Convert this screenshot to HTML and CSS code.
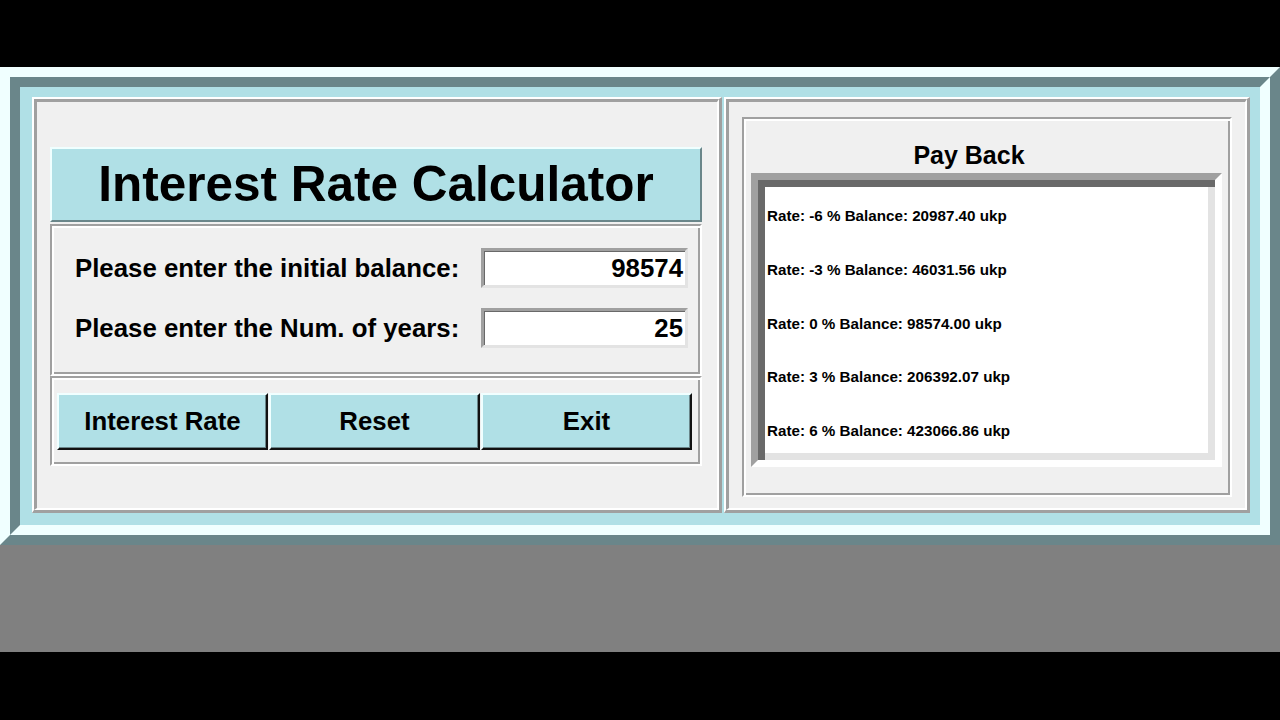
FILE: index.html
```html
<!DOCTYPE html>
<html>
<head>
<meta charset="utf-8">
<title>Interest Rate Calculator</title>
<link rel="stylesheet" href="styles.css">
</head>
<body>
<div class="top-bar"></div>
<div class="window">
  <div class="window-inner">
    <div class="panel left-panel">
      <div class="panel-inner">
        <div class="title">Interest Rate Calculator</div>
        <div class="groove entries">
          <div class="field-label">Please enter the initial balance:</div>
          <div class="entry">98574</div>
          <div class="field-label">Please enter the Num. of years:</div>
          <div class="entry">25</div>
        </div>
        <div class="groove buttons">
          <div class="btn">Interest Rate</div>
          <div class="btn">Reset</div>
          <div class="btn">Exit</div>
        </div>
      </div>
    </div>
    <div class="panel right-panel">
      <div class="panel-inner">
        <div class="groove payback">
          <div class="payback-title">Pay Back</div>
          <div class="listbox">
            <div class="item">Rate: -6 % Balance: 20987.40 ukp</div>
            <div class="item">Rate: -3 % Balance: 46031.56 ukp</div>
            <div class="item">Rate: 0 % Balance: 98574.00 ukp</div>
            <div class="item">Rate: 3 % Balance: 206392.07 ukp</div>
            <div class="item">Rate: 6 % Balance: 423066.86 ukp</div>
          </div>
        </div>
      </div>
    </div>
  </div>
</div>
<div class="gray-area"></div>
</body>
</html>
```
FILE: styles.css
```css
html, body {
  margin: 0;
  padding: 0;
}
body {
  width: 1280px;
  height: 720px;
  overflow: hidden;
  background: #000;
  font-family: "Liberation Sans", Arial, sans-serif;
  font-weight: bold;
  color: #000;
}
.top-bar {
  height: 67px;
  background: #000;
}
.window {
  height: 478px;
  box-sizing: border-box;
  border: 10px solid;
  border-color: #f0ffff #6a868a #6a868a #f0ffff;
}
.window-inner {
  height: 100%;
  box-sizing: border-box;
  border: 10px solid;
  border-color: #6a868a #f0ffff #f0ffff #6a868a;
  background: #b0e0e6;
  padding: 10px 10px 12px 12px;
  display: flex;
  gap: 2px;
}
.gray-area {
  height: 107px;
  background: #808080;
}
.panel {
  box-sizing: border-box;
  border-style: solid;
  border-width: 2px 3px 3px 2px;
  border-color: #ffffff #a0a0a0 #a0a0a0 #ffffff;
}
.panel-inner {
  box-sizing: border-box;
  height: 100%;
  border-style: solid;
  border-width: 3px 2px 2px 3px;
  border-color: #a0a0a0 #ffffff #ffffff #a0a0a0;
  background: #f0f0f0;
  display: flex;
  flex-direction: column;
}
.left-panel {
  width: 690px;
}
.right-panel {
  flex: 1;
}
.title {
  margin: 45px 15px 0 13px;
  height: 75px;
  box-sizing: border-box;
  border: 2px solid;
  border-color: #f0ffff #6a868a #6a868a #f0ffff;
  background: #b0e0e6;
  font-size: 49.5px;
  line-height: 69px;
  text-align: center;
}
.groove {
  box-sizing: border-box;
  border: 2px solid;
  border-color: #a0a0a0 #ffffff #ffffff #a0a0a0;
  box-shadow: inset 2px 2px #ffffff, inset -2px -2px #a0a0a0;
}
.entries {
  margin: 2px 15px 0 13px;
  height: 152px;
  padding: 22px 0 0 23px;
  display: grid;
  grid-template-columns: 385px 207px;
  grid-auto-rows: 40px;
  column-gap: 21px;
  row-gap: 20px;
  align-content: start;
}
.field-label {
  font-size: 25.8px;
  line-height: 40px;
  white-space: nowrap;
}
.entry {
  box-sizing: border-box;
  height: 40px;
  border: 3px solid;
  border-color: #a0a0a0 #e3e3e3 #e3e3e3 #a0a0a0;
  box-shadow: inset 1px 1px #696969;
  background: #ffffff;
  font-size: 25.8px;
  line-height: 34px;
  text-align: right;
  padding-right: 2px;
}
.buttons {
  margin: 0 15px 0 13px;
  height: 90px;
  padding: 15px 0 0 5px;
  display: flex;
  gap: 1px;
}
.btn {
  width: 211px;
  height: 57px;
  box-sizing: border-box;
  border: 2px solid;
  border-color: #f0ffff #111111 #111111 #f0ffff;
  box-shadow: inset -1px -1px #6a868a;
  background: #b0e0e6;
  font-size: 25.8px;
  line-height: 52px;
  text-align: center;
}
.payback {
  margin: 15px 13px 11px 13px;
  flex: 1;
  padding: 2px;
  display: flex;
  flex-direction: column;
}
.payback-title {
  height: 52px;
  box-sizing: border-box;
  padding: 16px 36px 0 0;
  font-size: 25px;
  line-height: 36px;
  text-align: center;
}
.listbox {
  margin: 0 6px 0 5px;
  height: 294px;
  box-sizing: border-box;
  border: 7px solid;
  border-color: #a0a0a0 #ffffff #ffffff #a0a0a0;
  box-shadow: inset 7px 7px #696969, inset -7px -7px #e3e3e3;
  padding: 9px 7px 7px 7px;
  background: #ffffff;
}
.item {
  padding-left: 2px;
  font-size: 15.2px;
  line-height: 53.75px;
  white-space: nowrap;
}
```
